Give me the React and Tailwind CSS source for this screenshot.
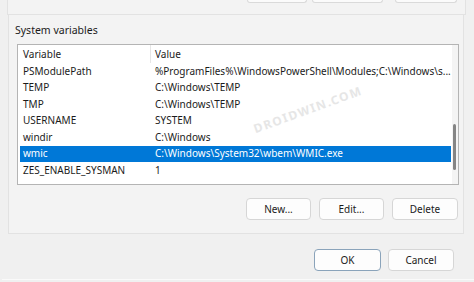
import React from 'react';

const rows = [
  { name: 'PSModulePath', value: '%ProgramFiles%\\WindowsPowerShell\\Modules;C:\\Windows\\s...' },
  { name: 'TEMP', value: 'C:\\Windows\\TEMP' },
  { name: 'TMP', value: 'C:\\Windows\\TEMP' },
  { name: 'USERNAME', value: 'SYSTEM' },
  { name: 'windir', value: 'C:\\Windows' },
  { name: 'wmic', value: 'C:\\Windows\\System32\\wbem\\WMIC.exe', selected: true },
  { name: 'ZES_ENABLE_SYSMAN', value: '1' },
];

function Button({ label, width, primary }) {
  return (
    <div
      className={`h-[22px] flex items-center justify-center rounded-[4px] bg-[#fdfdfd] text-[#1b1b1b] ${primary ? 'border border-[#8aa3ba]' : 'border border-[#d6d6d6]'}`}
      style={{ width }}
    >
      {label}
    </div>
  );
}

export default function App() {
  return (
    <div
      className="w-[474px] h-[282px] bg-[#f0f0f0] overflow-hidden flex flex-col text-[10px] text-[#1b1b1b]"
      style={{ fontFamily: '"Noto Sans", "Open Sans", sans-serif' }}
    >
      {/* bottom of the upper group */}
      <div className="ml-[7px] w-[459px] h-[15px] shrink-0 border-x border-b border-[#e2e2e2] bg-[#f3f3f3] flex items-start pl-[239px]">
        <div className="w-[60px] h-[3px] bg-[#fbfbfb] border-x border-b border-[#dadada] rounded-b-[3px]" />
        <div className="w-[71px] h-[3px] ml-[5px] bg-[#fbfbfb] border-x border-b border-[#dadada] rounded-b-[3px]" />
        <div className="w-[62px] h-[3px] ml-[12px] bg-[#fbfbfb] border-x border-b border-[#dadada] rounded-b-[3px]" />
      </div>

      {/* System variables group */}
      <div className="ml-[8px] w-[456px] h-[219px] shrink-0 border-x border-b border-[#e2e2e2] bg-[#f3f3f3] flex flex-col">
        <div className="ml-[6px] mt-[8px] h-[14px] leading-[14px] text-[10.5px]">System variables</div>

        <div className="relative ml-[8px] mt-[7px] w-[442px] h-[141px] border border-[#b4b4b4] bg-white flex overflow-hidden">
          <div className="flex-1 flex flex-col">
            <div className="h-[18px] ml-[2px] flex items-center">
              <div className="w-[131px] h-full pl-[3px] flex items-center border-r border-[#e6e6e6]">Variable</div>
              <div className="pl-[4px]">Value</div>
            </div>
            {rows.map((r) => (
              <div
                key={r.name}
                className={`h-[16.5px] ml-[2px] mr-[1px] flex items-center whitespace-nowrap ${r.selected ? 'bg-[#0078d7] text-white' : ''}`}
              >
                <div className="w-[132px] pl-[3px] shrink-0">{r.name}</div>
                <div className="pl-[3px]">{r.value}</div>
              </div>
            ))}
          </div>
          <div className="w-[14px] h-full bg-[#f4f4f4] flex flex-col items-center">
            <div className="mt-[79px] w-[3px] h-[46px] rounded-full bg-[#858585]" />
          </div>

          {/* watermark */}
          <div className="absolute left-[230px] top-[56px] w-[120px] text-center -rotate-[20deg] text-[12px] font-bold tracking-[1.5px] text-[#e6e6e6] select-none">
            DROIDWIN.COM
          </div>
        </div>

        <div className="mt-[13px] ml-[237px] flex gap-[8px]">
          <Button label="New..." width={65} />
          <Button label="Edit..." width={65} />
          <Button label="Delete" width={66} />
        </div>
      </div>

      {/* dialog buttons */}
      <div className="mt-[15px] ml-[314px] flex gap-[7px]">
        <Button label="OK" width={67} primary />
        <Button label="Cancel" width={66} />
      </div>

      <div className="mt-[8px] ml-[2px] h-[1px] bg-[#fafafa]" />
    </div>
  );
}
